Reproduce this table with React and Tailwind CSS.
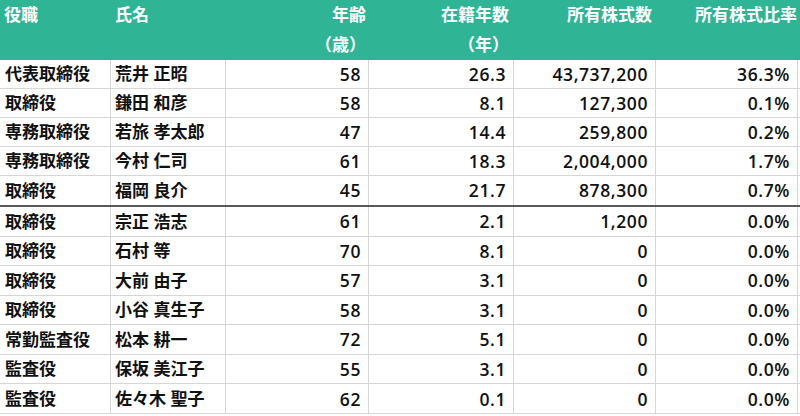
const rows = [
  ['代表取締役', '荒井 正昭', '58', '26.3', '43,737,200', '36.3%'],
  ['取締役', '鎌田 和彦', '58', '8.1', '127,300', '0.1%'],
  ['専務取締役', '若旅 孝太郎', '47', '14.4', '259,800', '0.2%'],
  ['専務取締役', '今村 仁司', '61', '18.3', '2,004,000', '1.7%'],
  ['取締役', '福岡 良介', '45', '21.7', '878,300', '0.7%'],
]

const outside = [
  ['取締役', '宗正 浩志', '61', '2.1', '1,200', '0.0%'],
  ['取締役', '石村 等', '70', '8.1', '0', '0.0%'],
  ['取締役', '大前 由子', '57', '3.1', '0', '0.0%'],
  ['取締役', '小谷 真生子', '58', '3.1', '0', '0.0%'],
  ['常勤監査役', '松本 耕一', '72', '5.1', '0', '0.0%'],
  ['監査役', '保坂 美江子', '55', '3.1', '0', '0.0%'],
  ['監査役', '佐々木 聖子', '62', '0.1', '0', '0.0%'],
]

const cols = 'grid grid-cols-[111px_115px_143px_145px_142px_142px]'

function Row({ r, className }) {
  return (
    <div className={`${cols} border-b border-[#d6d6d6] ${className}`}>
      <div className="flex items-center pl-[5px] border-r border-[#d6d6d6]">{r[0]}</div>
      <div className="flex items-center pl-[4px] border-r border-[#d6d6d6]">{r[1]}</div>
      {r.slice(2).map((v, i) => (
        <div
          key={i}
          className="flex items-center justify-end pr-[7px] border-r border-[#d6d6d6] text-[17.5px] tracking-[0.6px]"
        >
          {v}
        </div>
      ))}
    </div>
  )
}

export default function App() {
  return (
    <div
      className="w-[800px] h-[416px] bg-white text-[17px] font-semibold text-[#111]"
      style={{ fontFamily: '"Open Sans", "Noto Sans CJK JP", sans-serif' }}
    >
      {/* Header */}
      <div className={`${cols} h-[60px] bg-[#2fb495] text-white leading-[30px]`}>
        <div className="pl-[4px]">役職</div>
        <div className="pl-[4px]">氏名</div>
        <div className="flex flex-col items-end pr-[3px]">
          <span>年齢</span>
          <span>（歳）</span>
        </div>
        <div className="flex flex-col items-end pr-[5px]">
          <span>在籍年数</span>
          <span>（年）</span>
        </div>
        <div className="flex flex-col items-end pr-[4px]">
          <span>所有株式数</span>
        </div>
        <div className="flex flex-col items-end pr-[1px]">
          <span className="whitespace-nowrap">所有株式比率</span>
        </div>
      </div>

      {/* Inside directors */}
      <div className="flex flex-col">
        {rows.map((r, i) => (
          <Row key={i} r={r} className={i === rows.length - 1 ? 'h-[29px] border-b-0' : 'h-[29px]'} />
        ))}
      </div>

      {/* Outside directors / auditors */}
      <div className="h-[209px] flex flex-col border-t-2 border-[#5a5a5a]">
        {outside.map((r, i) => (
          <Row key={i} r={r} className="flex-1" />
        ))}
      </div>
    </div>
  )
}
